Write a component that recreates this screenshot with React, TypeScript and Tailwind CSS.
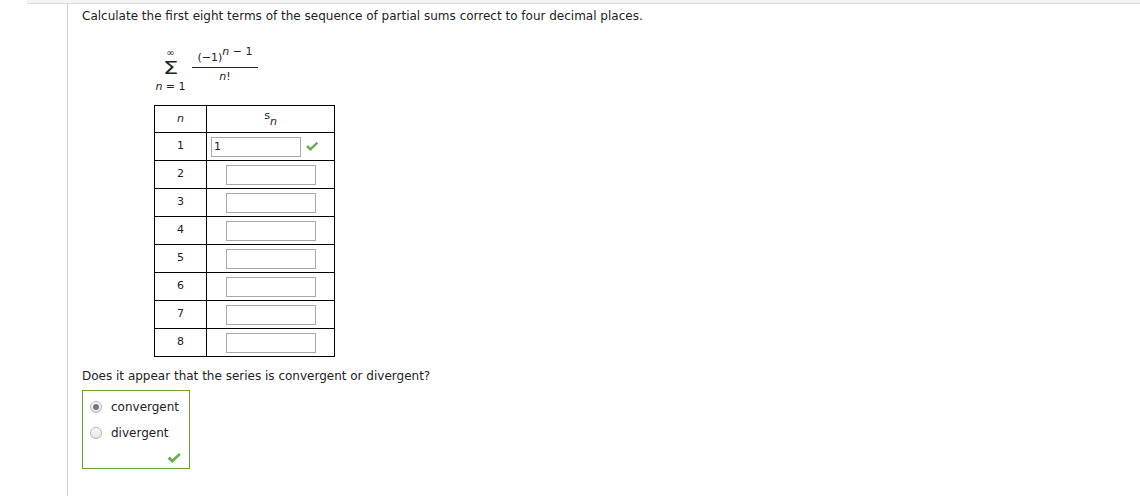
import React from 'react'

const font = { fontFamily: '"DejaVu Sans", Verdana, sans-serif' }

function Check({ className = '' }: { className?: string }) {
  return (
    <svg viewBox="0 0 16 13" className={className} aria-hidden>
      <path d="M1 7.2 L3.4 5 L6.2 7.6 L13.4 1 L15.4 3 L6.2 11.8 Z" fill="#6ab04c" />
    </svg>
  )
}

function Radio({ checked }: { checked?: boolean }) {
  return (
    <span className="inline-flex h-[12px] w-[12px] items-center justify-center rounded-full border border-[#b5b5b5] bg-gradient-to-b from-[#fdfdfd] to-[#e4e4e4]">
      {checked && <span className="h-[6px] w-[6px] rounded-full bg-[#777]" />}
    </span>
  )
}

export default function App() {
  const rows = [1, 2, 3, 4, 5, 6, 7, 8]
  return (
    <div className="relative h-[496px] w-[1140px] overflow-hidden bg-white text-[#222]" style={font}>
      {/* top strip */}
      <div className="ml-[27px] h-[4px] border-b border-[#dcdcdc] bg-[#f4f4f4]" />
      <div className="flex">
        <div className="ml-[67px] h-[492px] w-px bg-[#cfcfcf]" />
        <div className="pl-[14px] pt-[4px]">
          <p className="text-[12px] leading-[16px]">
            Calculate the first eight terms of the sequence of partial sums correct to four decimal places.
          </p>

          {/* series */}
          <div className="ml-[72px] mt-[25px] flex items-center text-[11px] leading-none">
            <div className="flex w-[33px] flex-col items-center">
              <span className="mb-[2px] text-[10px] leading-[8px]">∞</span>
              <span className="scale-x-[1.35] text-[18px] leading-[17px]">Σ</span>
              <span className="mt-[5px] whitespace-nowrap text-[11px]">
                <i>n</i> = 1
              </span>
            </div>
            <div className="ml-[5px] mb-[8px] flex flex-col items-center">
              <span className="px-[2px] pb-[4px] whitespace-nowrap text-[11px]">
                (−1)<sup className="text-[11px]"><i>n</i> − 1</sup>
              </span>
              <span className="h-px w-[66px] bg-[#222]" />
              <span className="pt-[3px] text-[11px]">
                <i>n</i>!
              </span>
            </div>
          </div>

          {/* table */}
          <table className="ml-[72px] mt-[13px] border-collapse text-[11px]">
            <thead>
              <tr className="h-[27px]">
                <th className="w-[52px] border border-black font-normal">
                  <i>n</i>
                </th>
                <th className="w-[128px] border border-black font-normal">
                  <span className="relative -top-[3px]">s</span>
                  <sub className="text-[11px]">
                    <i>n</i>
                  </sub>
                </th>
              </tr>
            </thead>
            <tbody>
              {rows.map(n => (
                <tr key={n} className="h-[28px]">
                  <td className="border border-black text-center">{n}</td>
                  <td className="border border-black">
                    {n === 1 ? (
                      <div className="flex items-center pl-[4px]">
                        <input
                          readOnly
                          value="1"
                          className="h-[20px] w-[90px] border border-[#a9a9a9] px-[2px] text-[11px] outline-none"
                          style={font}
                        />
                        <Check className="ml-[4px] h-[11px] w-[14px]" />
                      </div>
                    ) : (
                      <div className="flex justify-center">
                        <input
                          readOnly
                          className="h-[20px] w-[90px] border border-[#a9a9a9] outline-none"
                        />
                      </div>
                    )}
                  </td>
                </tr>
              ))}
            </tbody>
          </table>

          <p className="mt-[11px] text-[12px] leading-[16px]">Does it appear that the series is convergent or divergent?</p>

          <div className="mt-[6px] flex h-[79px] w-[108px] flex-col border border-[#6a9f3a] px-[7px] pt-[8px]">
            <label className="flex items-center gap-[9px] text-[12px] leading-[16px]">
              <Radio checked />
              convergent
            </label>
            <label className="mt-[10px] flex items-center gap-[9px] text-[12px] leading-[16px]">
              <Radio />
              divergent
            </label>
            <div className="mt-auto mb-[4px] flex justify-end">
              <Check className="h-[12px] w-[16px]" />
            </div>
          </div>
        </div>
      </div>
    </div>
  )
}
